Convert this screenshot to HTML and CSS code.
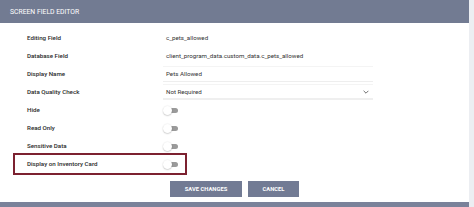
FILE: index.html
```html
<!DOCTYPE html>
<html lang="en">
<head>
  <meta charset="UTF-8" />
  <title>Screen Field Editor</title>
  <link rel="stylesheet" href="styles.css">
</head>
<body>

  <div class="dialog">
    <header class="dialog-header">SCREEN FIELD EDITOR</header>

    <div class="form">
      <div class="row">
        <div class="label">Editing Field</div>
        <div class="value">c_pets_allowed</div>
      </div>
      <div class="row">
        <div class="label">Database Field</div>
        <div class="value">client_program_data.custom_data.c_pets_allowed</div>
      </div>
      <div class="row">
        <div class="label">Display Name</div>
        <div class="input">Pets Allowed</div>
      </div>
      <div class="row">
        <div class="label">Data Quality Check</div>
        <div class="input select">
          <span>Not Required</span>
          <svg class="chevron" viewBox="0 0 10 6" width="6" height="4"><path d="M1 1l4 4 4-4" fill="none" stroke="#555" stroke-width="1.4"/></svg>
        </div>
      </div>
      <div class="row">
        <div class="label">Hide</div>
        <div class="toggle"><span class="knob"></span></div>
      </div>
      <div class="row">
        <div class="label">Read Only</div>
        <div class="toggle"><span class="knob"></span></div>
      </div>
      <div class="row">
        <div class="label">Sensitive Data</div>
        <div class="toggle"><span class="knob"></span></div>
      </div>
      <div class="row highlight">
        <div class="label">Display on Inventory Card</div>
        <div class="toggle"><span class="knob"></span></div>
      </div>
    </div>

    <div class="actions">
      <button class="button save">SAVE CHANGES</button>
      <button class="button cancel">CANCEL</button>
    </div>

    <footer class="dialog-footer"></footer>
  </div>

</body>
</html>
```

FILE: styles.css
```css
* {
  box-sizing: border-box;
}

body {
  margin: 0;
  background: #eceef2;
  font-family: Roboto, "Liberation Sans", sans-serif;
  color: #333;
}

.dialog {
  width: 469px;
  height: 207px;
  background: #fff;
  display: flex;
  flex-direction: column;
}

.dialog-header {
  height: 23px;
  background: #727b92;
  color: #fff;
  font-size: 6.8px;
  padding: 0 10px;
  display: flex;
  align-items: center;
}

.form {
  padding: 6px 0 0 27px;
}

.row {
  display: grid;
  grid-template-columns: 136px 210px;
  align-items: center;
  height: 18px;
  font-size: 6.2px;
}

.label {
  font-weight: 500;
  color: #2a2a2a;
}

.value {
  padding-left: 3px;
}

.input {
  height: 16px;
  border-top: 1px solid #f4f4f4;
  border-bottom: 1px solid #eeeeee;
  padding-left: 3px;
  display: flex;
  align-items: center;
}

.select {
  justify-content: space-between;
  padding-right: 4px;
  border-bottom: 2px solid #efefef;
}

.chevron {
  display: block;
}

.toggle {
  position: relative;
  width: 15px;
  height: 9px;
}

.toggle::before {
  content: '';
  position: absolute;
  left: 3px;
  right: 0;
  top: 2px;
  height: 5px;
  border-radius: 3px;
  background: #9a9a9a;
}

.knob {
  position: absolute;
  left: 0;
  top: 0;
  width: 9px;
  height: 9px;
  border-radius: 50%;
  background: #fff;
  box-shadow: 0 0.5px 1.5px rgba(0, 0, 0, 0.3);
}

.highlight {
  width: 170px;
  margin-left: -12px;
  padding-left: 12px;
  grid-template-columns: 136px 20px;
  outline: 2px solid #7c2130;
}

.actions {
  display: flex;
  justify-content: center;
  gap: 6px;
  margin-top: 8px;
}

.button {
  height: 16px;
  border: none;
  background: #727b94;
  color: #fff;
  font-family: Roboto, "Liberation Sans", sans-serif;
  font-size: 5.8px;
  font-weight: 700;
  padding: 0;
  cursor: pointer;
}

.save {
  width: 72px;
}

.cancel {
  width: 51px;
}

.dialog-footer {
  margin-top: auto;
  height: 5px;
  background: #7a829a;
}
```
